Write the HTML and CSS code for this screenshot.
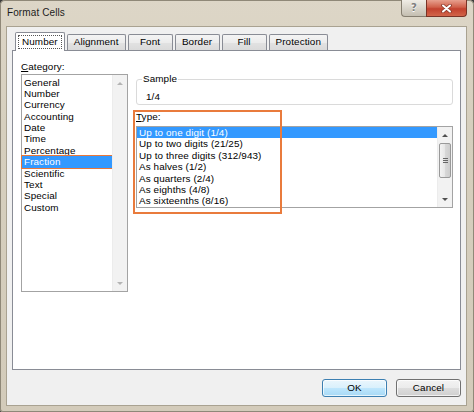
FILE: index.html
```html
<!DOCTYPE html>
<html>
<head>
<meta charset="utf-8">
<title>Format Cells</title>
<link rel="stylesheet" href="styles.css">
</head>
<body>
<div class="window">
  <div class="titlebar">
    <span class="title">Format Cells</span>
    <div class="controls">
      <span class="btn-help">?</span>
      <span class="btn-close">
        <svg width="11" height="9" viewBox="0 0 11 9">
          <path d="M2 1.5 L9 7.5 M9 1.5 L2 7.5" stroke="#8a3a2c" stroke-width="3.6" stroke-linecap="round"/>
          <path d="M2 1.5 L9 7.5 M9 1.5 L2 7.5" stroke="#ffffff" stroke-width="2" stroke-linecap="round"/>
        </svg>
      </span>
    </div>
  </div>
  <div class="client">
    <div class="tabs">
      <div class="tab active"><span class="focus">Number</span></div>
      <div class="tab">Alignment</div>
      <div class="tab">Font</div>
      <div class="tab">Border</div>
      <div class="tab">Fill</div>
      <div class="tab">Protection</div>
    </div>
    <div class="panel">
      <div class="left">
        <div class="label"><u>C</u>ategory:</div>
        <div class="listbox category">
          <ul class="items">
            <li>General</li>
            <li>Number</li>
            <li>Currency</li>
            <li>Accounting</li>
            <li>Date</li>
            <li>Time</li>
            <li>Percentage</li>
            <li class="selected marked">Fraction</li>
            <li>Scientific</li>
            <li>Text</li>
            <li>Special</li>
            <li>Custom</li>
          </ul>
          <div class="scrollbar disabled">
            <span class="arrow-box"><span class="arrow up"></span></span>
            <span class="spacer"></span>
            <span class="arrow-box"><span class="arrow down"></span></span>
          </div>
        </div>
      </div>
      <div class="right">
        <fieldset class="sample">
          <legend>Sample</legend>
          <div class="sample-value">1/4</div>
        </fieldset>
        <div class="type-group">
          <div class="label"><u>T</u>ype:</div>
          <div class="listbox type">
            <ul class="items">
              <li class="selected">Up to one digit (1/4)</li>
              <li>Up to two digits (21/25)</li>
              <li>Up to three digits (312/943)</li>
              <li>As halves (1/2)</li>
              <li>As quarters (2/4)</li>
              <li>As eighths (4/8)</li>
              <li>As sixteenths (8/16)</li>
            </ul>
            <div class="scrollbar">
              <span class="arrow-box"><span class="arrow up"></span></span>
              <span class="thumb"><span class="grip"></span></span>
              <span class="spacer"></span>
              <span class="arrow-box"><span class="arrow down"></span></span>
            </div>
          </div>
          <div class="annotation"></div>
        </div>
      </div>
    </div>
    <div class="buttons">
      <button class="btn default">OK</button>
      <button class="btn">Cancel</button>
    </div>
  </div>
</div>
</body>
</html>
```

FILE: styles.css
```css
* { box-sizing: border-box; }
html, body { margin: 0; padding: 0; }
body {
  width: 474px;
  height: 412px;
  overflow: hidden;
  background: #3c3c3c;
  font-family: "Liberation Sans", Arial, sans-serif;
  font-size: 9.9px;
  letter-spacing: 0.1px;
  color: #000;
}
.window {
  width: 474px;
  height: 412px;
  display: flex;
  flex-direction: column;
  padding: 0 7px 6px 6px;
  background: linear-gradient(#ddd6c7, #d6cfbe 30%, #d3cbba);
  border-radius: 5px 5px 3px 3px;
  box-shadow: inset 0 0 0 1px #8f8878;
}
.titlebar {
  height: 26px;
  flex: none;
  display: flex;
  justify-content: space-between;
  align-items: flex-start;
}
.title {
  padding: 7px 0 0 1px;
  font-size: 10px;
  line-height: 12px;
  color: #1b1b1b;
}
.controls { display: flex; height: 17px; }
.btn-help {
  width: 25px;
  height: 17px;
  border: 1px solid #857e70;
  border-top: none;
  border-right: none;
  border-radius: 0 0 0 4px;
  background: linear-gradient(#f0ede6, #d9d5cb 50%, #c4beb1);
  color: #7e7e7e;
  font-family: "DejaVu Sans", sans-serif;
  font-weight: bold;
  font-size: 10px;
  line-height: 16px;
  text-align: center;
  text-shadow: 0 1px 0 #fff;
}
.btn-close {
  width: 41px;
  height: 17px;
  border: 1px solid #7a3326;
  border-top: none;
  border-radius: 0 0 4px 0;
  background: linear-gradient(#e7a08e, #d0604a 45%, #c2412e 55%, #d2654a);
  display: flex;
  align-items: center;
  justify-content: center;
}
.client {
  flex: 1;
  display: flex;
  flex-direction: column;
  background: #f0f0f0;
  border: 1px solid #a9a291;
  padding: 5px 5px 0 5px;
}
.tabs {
  display: flex;
  align-items: flex-end;
  gap: 2px;
  height: 19px;
  padding-left: 3px;
  margin-bottom: -1px;
}
.tab {
  min-width: 45px;
  height: 16px;
  margin-bottom: 1px;
  padding: 0 6px;
  border: 1px solid #898c95;
  border-bottom: none;
  border-radius: 2px 2px 0 0;
  background: linear-gradient(#f4f4f4, #ececec 50%, #e2e2e2 51%, #dadada);
  line-height: 14px;
  text-align: center;
  white-space: nowrap;
}
.tab.active {
  position: relative;
  z-index: 1;
  height: 19px;
  margin-bottom: 0;
  padding: 2px 2px 0 2px;
  background: #fff;
}
.focus {
  display: block;
  border: 1px dotted #555;
  padding: 0 3px;
  line-height: 12px;
}
.panel {
  flex: 1;
  display: flex;
  gap: 8px;
  background: #fff;
  border: 1px solid #898c95;
  padding: 10px 7px 0 8px;
}
.left { width: 107px; flex: none; }
.label {
  line-height: 12px;
  margin-bottom: 1px;
}
.listbox {
  display: flex;
  border: 1px solid #a3a3a3;
  background: #fff;
}
.listbox.category { height: 218px; }
.items {
  flex: 1;
  margin: 0;
  padding: 0;
  list-style: none;
}
.category .items { padding-top: 1.5px; }
.items li {
  line-height: 11.4px;
  height: 11.4px;
  padding-left: 2px;
  white-space: nowrap;
}
.items li.selected {
  background: #3399ff;
  color: #fff;
}
.items li.marked {
  outline: 1px solid #e8773a;
}
.scrollbar {
  width: 15px;
  flex: none;
  display: flex;
  flex-direction: column;
  background: #f2f2f2;
  border-left: 1px solid #ececec;
}
.arrow-box {
  height: 16px;
  display: flex;
  align-items: center;
  justify-content: center;
}
.spacer { flex: 1; }
.arrow {
  width: 0;
  height: 0;
  border-left: 3px solid transparent;
  border-right: 3px solid transparent;
}
.arrow.up { border-bottom: 3px solid #505050; }
.arrow.down { border-top: 3px solid #505050; }
.disabled .arrow.up { border-bottom-color: #b4b4b4; }
.disabled .arrow.down { border-top-color: #b4b4b4; }
.thumb {
  height: 35px;
  margin: 0 1px;
  border: 1px solid #999;
  border-radius: 2px;
  background: linear-gradient(90deg, #f3f3f3, #e6e6e6 50%, #d8d8d8 51%, #cdcdcd);
  display: flex;
  align-items: center;
  justify-content: center;
}
.grip {
  width: 5px;
  height: 5px;
  border-top: 1px solid #666;
  border-bottom: 1px solid #666;
  background: linear-gradient(#666, #666) center / 5px 1px no-repeat;
}
.right {
  flex: 1;
  display: flex;
  flex-direction: column;
}
.sample {
  margin: 12px 0 0 0;
  padding: 0 0 1px 5px;
  border: 1px solid #dadada;
  border-radius: 3px;
  min-width: 0;
}
.sample legend {
  padding: 0 1px;
  line-height: 12px;
}
.sample-value {
  margin-top: 6px;
  padding-left: 4px;
  line-height: 12px;
}
.type-group {
  position: relative;
  margin-top: 6px;
}
.type-group .label { margin-bottom: 3px; }
.listbox.type { height: 82px; }
.annotation {
  position: absolute;
  left: -3px;
  top: -1px;
  width: 149px;
  height: 104px;
  border: 2px solid #e97b3c;
  pointer-events: none;
}
.buttons {
  display: flex;
  justify-content: flex-end;
  gap: 9px;
  margin: 9px 0 8px 0;
}
.btn {
  width: 65px;
  height: 18px;
  padding: 0;
  font: inherit;
  letter-spacing: inherit;
  color: #000;
  line-height: 16px;
  border: 1px solid #707070;
  border-radius: 3px;
  background: linear-gradient(#f3f3f3, #ebebeb 50%, #dddddd 51%, #cfcfcf);
  box-shadow: inset 0 0 0 1px rgba(255,255,255,0.7);
}
.btn.default {
  border-color: #3c7fb1;
  background: linear-gradient(#eaf6fd, #d9f0fc 50%, #bee6fd 51%, #a7d9f5);
}
```
